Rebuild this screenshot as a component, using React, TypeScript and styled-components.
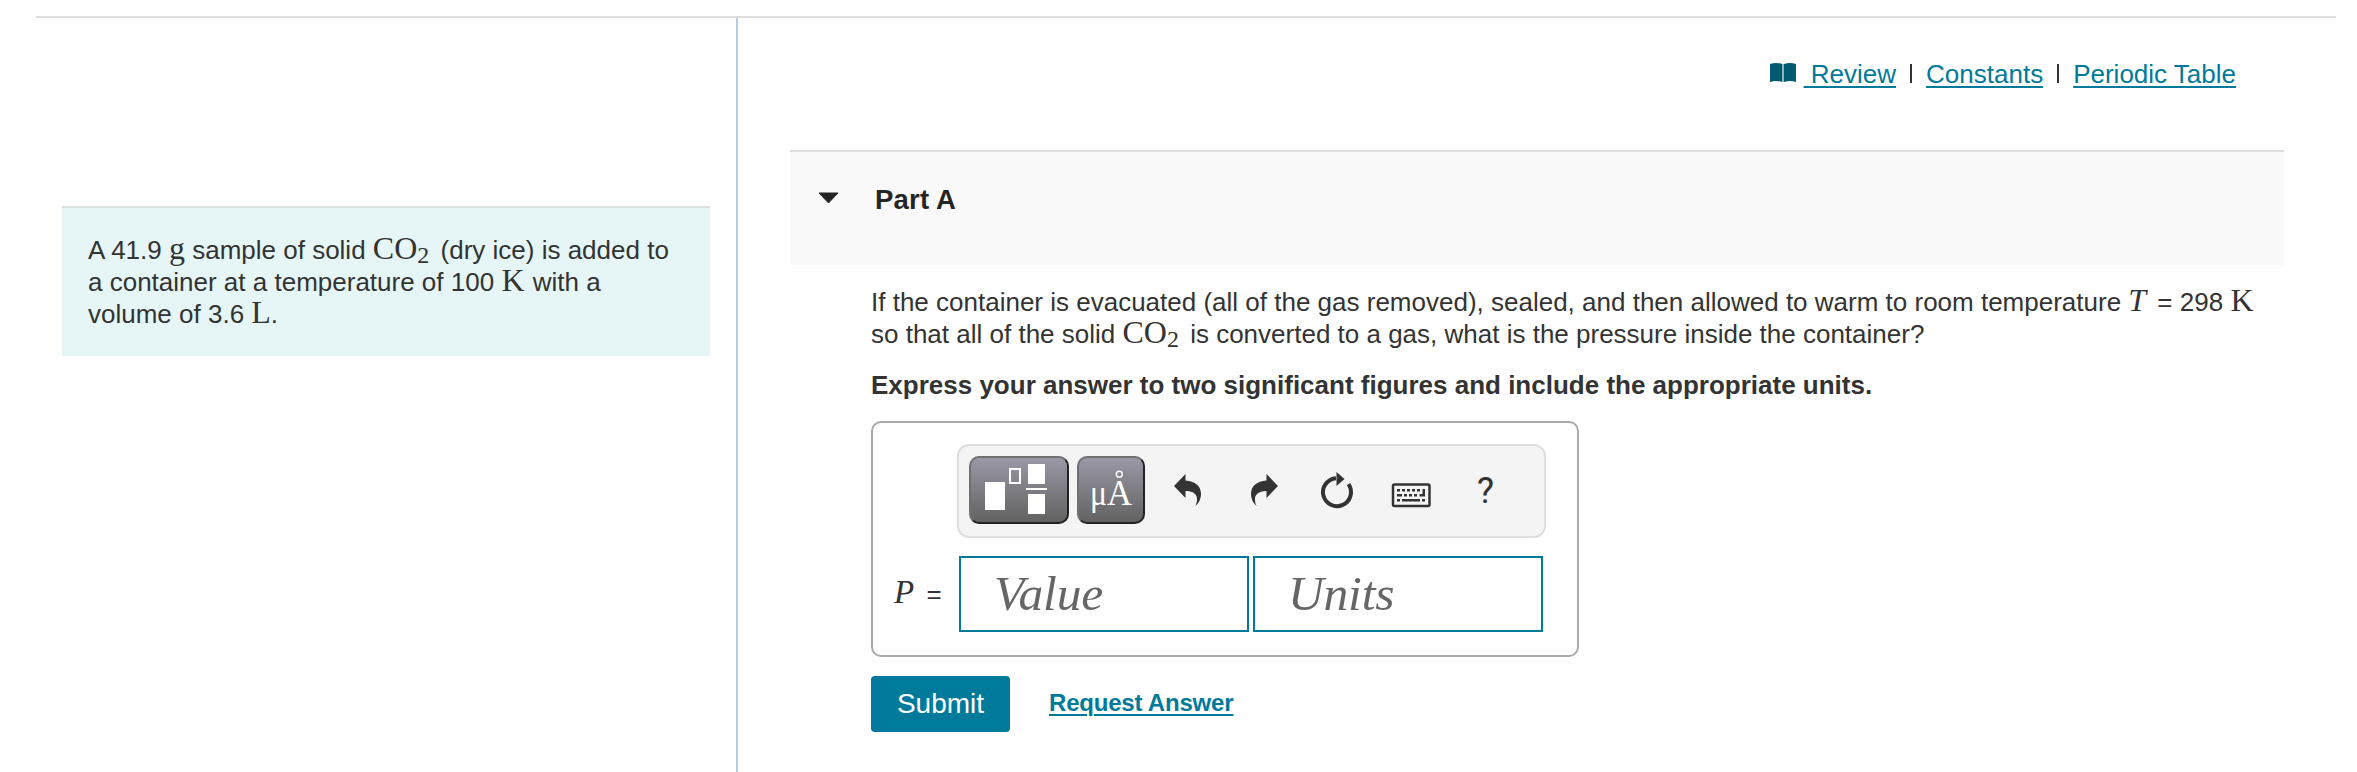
import React from 'react';
import styled, { createGlobalStyle } from 'styled-components';

const Global = createGlobalStyle`
  * { box-sizing: border-box; }
  body { margin: 0; background: #fff; color: #333; font: 26px/32px "Liberation Sans", Arial, sans-serif; }
`;
const Page = styled.div`
  height: 772px; padding: 16px 21px 0 36px; overflow: hidden;
`;
const Columns = styled.main`
  display: flex; height: 756px; border-top: 2px solid #dedede;
`;
const Sidebar = styled.aside`
  width: 702px; padding: 188px 26px 0; border-right: 2px solid #b9cde0;
`;
const Intro = styled.section`
  height: 150px; padding: 25px 26px 0; border-top: 2px solid #dadfdf; background: #e6f6f7;
`;
const Line = styled.div<{ $spacing?: number }>`
  display: flex; align-items: baseline; height: 32px; white-space: pre;
  letter-spacing: ${p => p.$spacing ?? 0}px;
`;
const MathText = styled.span<{ $gap?: number; $italic?: boolean }>`
  margin-right: ${p => p.$gap ?? 0}px;
  font: ${p => (p.$italic ? 'italic' : 'normal')} 32px/30px "Liberation Serif", "Times New Roman", serif;
  letter-spacing: 0;
  sub { font-size: 24px; line-height: 0; vertical-align: -4px; }
`;
const Content = styled.div`
  flex: 1; padding: 0 52px 0 52px;
`;
const Links = styled.nav`
  display: flex; align-items: baseline; justify-content: flex-end; height: 132px; padding: 40px 48px 0 0; white-space: pre;
  svg { margin-right: 8px; }
`;
const Link = styled.a<{ $bold?: boolean; $spacing?: number }>`
  color: #007a9b; font-weight: ${p => (p.$bold ? 'bold' : 'normal')}; white-space: pre;
  letter-spacing: ${p => p.$spacing ?? 0}px;
  text-decoration: underline; text-decoration-thickness: 2px; text-underline-offset: 3px;
  text-decoration-skip-ink: ${p => (p.$bold ? 'auto' : 'none')};
`;
const Separator = styled.span`
  width: 2px; height: 19px; margin: 0 14px; background: #333;
`;
const PartHeader = styled.header`
  display: flex; align-items: flex-start; height: 115px; padding: 32px 0 0 28px;
  border-top: 2px solid #dedede; background: #f9f9f9; color: #252525;
  svg { margin-top: 8px; }
`;
const PartTitle = styled.h2`
  margin: 0 0 0 36px; font-size: 27.5px; line-height: 32px; letter-spacing: 0.2px;
`;
const Body = styled.div`
  padding: 20px 0 0 81px;
`;
const Instruction = styled.p`
  margin: 20px 0 20px; height: 32px; font-weight: bold; white-space: nowrap;
`;
const AnswerBox = styled.section`
  width: 708px; height: 236px; padding: 21px 0 0 21px; border: 2px solid #aaa; border-radius: 10px;
`;
const Toolbar = styled.div`
  display: flex; width: 589px; height: 94px; margin-left: 63px; padding: 10px;
  border: 2px solid #dedede; border-radius: 12px; background: #f4f4f4;
`;
const ToolButton = styled.button<{ $w: number }>`
  width: ${p => p.$w}px; height: 68px; margin-right: 8px; padding: 0; border: 2px solid;
  border-color: #707070 #222 #222 #707070; border-radius: 10px;
  background: linear-gradient(#9a98a5, #626262); color: #fff;
  svg { display: block; }
`;
const Icons = styled.div`
  display: flex;
  svg { display: block; }
`;
const Help = styled.span`
  margin-left: 24px; padding-top: 17px; color: #333; font: 36px/36px Roboto, sans-serif;
`;
const Answer = styled.div`
  display: flex; align-items: flex-start; margin-top: 18px;
`;
const Label = styled.span`
  display: flex; align-items: baseline; width: 65px; padding-top: 18px; line-height: 36px; white-space: pre;
`;
const Symbol = styled.i`
  margin-right: 5px; font: italic 33px/36px "Liberation Serif", serif;
`;
const Field = styled.div`
  width: 290px; height: 76px; margin-right: 4px; padding: 0 0 0 33px; border: 2px solid #007a9b;
  color: #666; font: italic 49.500px/72px "Liberation Serif", "Times New Roman", serif;
  letter-spacing: -0.2px;
`;
const Actions = styled.div`
  display: flex; align-items: flex-start; margin-top: 19px;
`;
const Submit = styled.button`
  width: 139px; height: 56px; margin-right: 39px; padding: 0; border: 0; border-radius: 4px;
  background: #007a9b; color: #fff; font: 28px/56px "Liberation Sans", Arial, sans-serif;
`;
const RequestWrap = styled.span`
  padding-top: 11px; font-size: 24px;
`;

export default function App() {
  return (
    <Page>
      <Global />
      <Columns>
        <Sidebar>
          <Intro>
            <Line>A 41.9 <MathText>g</MathText> sample of solid <MathText $gap={4}>CO<sub>2</sub></MathText> (dry ice) is added to</Line>
            <Line>a container at a temperature of 100 <MathText $gap={1}>K</MathText> with a</Line>
            <Line>volume of 3.6 <MathText>L</MathText>.</Line>
          </Intro>
        </Sidebar>
        <Content>
          <Links>
            <svg width="26" height="20" viewBox="0 0 26 20"><path d="M0 1Q6-1 12 1V19Q6 17 0 19ZM14 1Q20-1 26 1V19Q20 17 14 19Z" fill="#005a70" /><path d="M13 1V19" stroke="#8fb5bf" strokeWidth="2" /></svg>
            <Link> Review</Link><Separator /><Link>Constants</Link><Separator /><Link>Periodic Table</Link>
          </Links>
          <PartHeader>
            <svg width="21" height="13" viewBox="0 0 21 13"><path d="M1 1H20L10.5 11Z" fill="#252525" stroke="#252525" strokeLinejoin="round" /></svg>
            <PartTitle>Part A</PartTitle>
          </PartHeader>
          <Body>
            <Line>If the container is evacuated (all of the gas removed), sealed, and then allowed to warm to room temperature <MathText $italic $gap={4}>T</MathText> = 298 <MathText>K</MathText></Line>
            <Line>so that all of the solid <MathText $gap={4}>CO<sub>2</sub></MathText> is converted to a gas, what is the pressure inside the container?</Line>
            <Instruction>Express your answer to two significant figures and include the appropriate units.</Instruction>
            <AnswerBox>
              <Toolbar>
                <ToolButton $w={100} aria-label="Templates">
                  <svg width="96" height="64" viewBox="0 0 96 64" fill="#fff"><path d="M14 24h20v28H14zM57 6h17v20H57zM55 30h21v2H55zM57 36h17v20H57z" /><path d="M39 11h10v14H39z" fill="none" stroke="#fff" strokeWidth="2" /></svg>
                </ToolButton>
                <ToolButton $w={68} aria-label="Units">
                  <svg width="64" height="64" viewBox="0 0 64 64" fill="#fff" fontFamily="Liberation Serif, serif" fontSize="36"><text x="11" y="47" textLength="17" lengthAdjust="spacingAndGlyphs">μ</text><text x="28" y="47" textLength="25" lengthAdjust="spacingAndGlyphs">A</text><circle cx="40.300" cy="16.300" r="3" fill="none" stroke="#fff" strokeWidth="1.4" /></svg>
                </ToolButton>
                <Icons>
                  <svg width="300" height="68" viewBox="1153 456 300 68" fill="#333">
                    <path d="M1174 486 1185.500 474V480.500C1195 481 1201 486 1201 494Q1201 501 1195.500 506C1199 498 1197 491 1185.500 491V498Z" />
                    <path d="M1278 486 1266.500 474V480.500C1257 481 1251 486 1251 494Q1251 501 1256.500 506C1253 498 1255 491 1266.500 491V498Z" />
                    <path d="M1336 478.200A14 14 0 1 0 1348.500 484.200" fill="none" stroke="#333" strokeWidth="4" /><path d="M1336.500 472 1344.500 479 1336.500 486Z" />
                    <rect x="1393" y="484.500" width="36.500" height="21.500" rx="1.500" fill="none" stroke="#333" strokeWidth="2.500" />
                    <path d="M1397 489h3v2.500h-3zM1402 489h3v2.500h-3zM1407 489h3v2.500h-3zM1412 489h3v2.500h-3zM1417 489h3v2.500h-3zM1422.500 489h2.500v7.500h-5.500v-2.500h3zM1397 494h5v2.500h-5zM1404 494h3v2.500h-3zM1409 494h3v2.500h-3zM1414 494h3v2.500h-3zM1397 499h3v2.500h-3zM1402 499h18v2.500h-18zM1422 499h3v2.500h-3z" />
                  </svg>
                </Icons>
                <Help>?</Help>
              </Toolbar>
              <Answer>
                <Label><Symbol>P</Symbol> =</Label>
                <Field>Value</Field><Field>Units</Field>
              </Answer>
            </AnswerBox>
            <Actions><Submit>Submit</Submit><RequestWrap><Link $bold $spacing={-0.2}>Request Answer</Link></RequestWrap></Actions>
          </Body>
        </Content>
      </Columns>
    </Page>
  );
}
